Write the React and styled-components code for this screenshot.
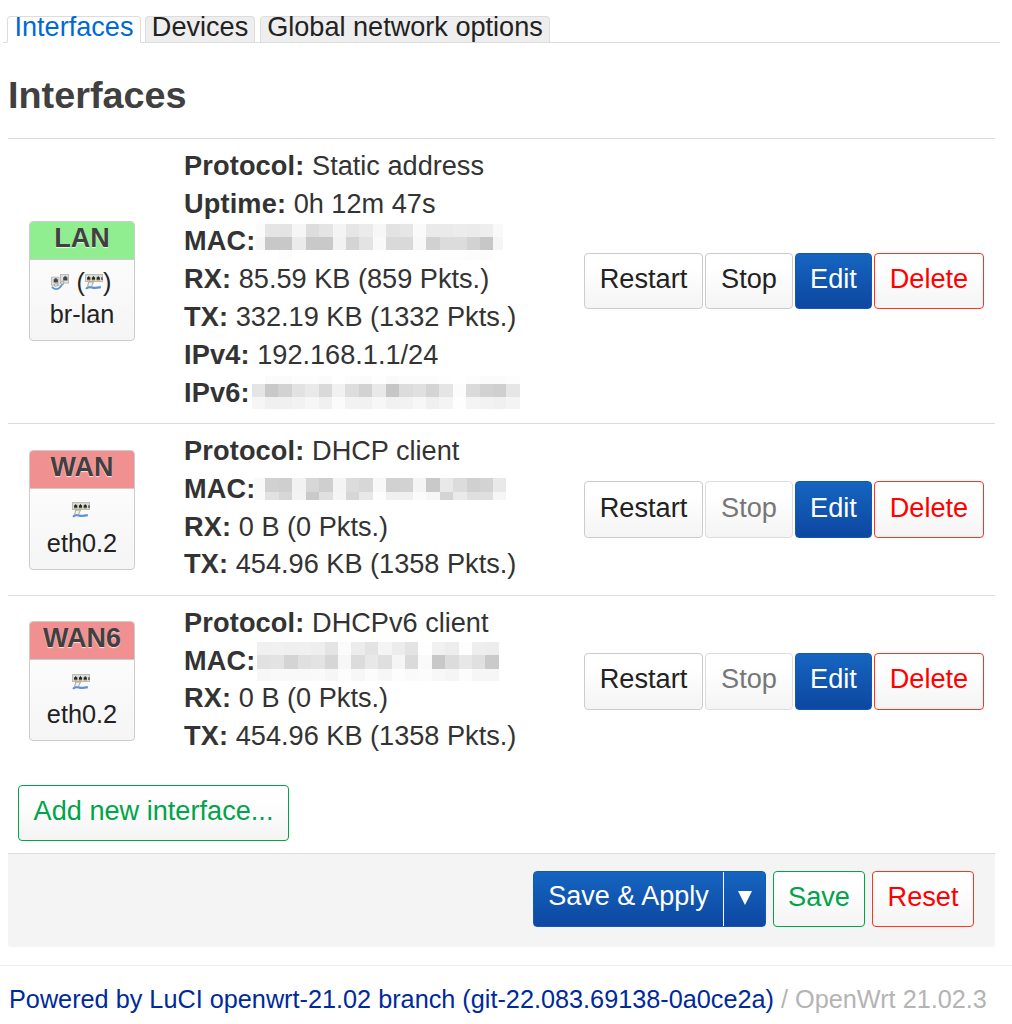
import React from "react";
import styled, { createGlobalStyle, css } from "styled-components";

const GlobalStyle = createGlobalStyle`
  * {
    box-sizing: border-box;
  }
  body {
    margin: 0;
    background: #fff;
    color: #333;
    font-family: "Liberation Sans", Arial, sans-serif;
    font-size: 27px;
    line-height: 37.8px;
    overflow: hidden;
  }
`;

const Page = styled.div`
  width: 1012px;
  height: 1024px;
  overflow: hidden;
`;

const Tabs = styled.nav`
  display: flex;
  align-items: flex-end;
  width: 997px;
  height: 43px;
  margin-left: 3px;
  padding-left: 4px;
  border-bottom: 1px solid #ddd;
`;

const Tab = styled.a`
  display: flex;
  align-items: center;
  justify-content: center;
  width: ${p => p.$width}px;
  height: ${p => (p.$active ? 27 : 26)}px;
  margin: 0 ${p => (p.$active ? 4 : 5)}px ${p => (p.$active ? -1 : 0)}px 0;
  padding-bottom: ${p => (p.$active ? 6 : 5)}px;
  border: 1px solid #ddd;
  border-bottom: ${p => (p.$active ? "1px solid #fff" : "0")};
  border-radius: 4px 4px 0 0;
  background: ${p => (p.$active ? "#fff" : "#eee")};
  color: ${p => (p.$active ? "#0069d6" : "#222")};
  font-size: 27.1px;
  line-height: 20px;
  white-space: nowrap;
`;

const Title = styled.h2`
  height: 95px;
  margin: 0 0 0 8px;
  padding-top: 25px;
  color: #404040;
  font-size: 37.8px;
  line-height: 54px;
`;

const Table = styled.div`
  width: 987px;
  margin-left: 8px;
`;

const Row = styled.div`
  display: grid;
  grid-template-columns: 176px 400px 400px;
  align-items: center;
  padding: 9.8px 0;
  border-top: 1px solid #ddd;
`;

const Badge = styled.div`
  width: 106px;
  height: 120px;
  margin-left: 21px;
  border: 1px solid #ccc;
  border-radius: 4px;
  background: linear-gradient(#fff, #f5f5f5);
  color: #222;
  text-align: center;
  overflow: hidden;
`;

const BadgeHead = styled.div`
  height: 38px;
  border-bottom: 1px solid #ccc;
  background: ${p => p.$color};
  color: #404040;
  font-weight: bold;
  line-height: 32px;
  text-shadow: 0 1px 1px rgba(255, 255, 255, 0.75);
`;

const BadgeIcons = styled.div`
  display: flex;
  align-items: center;
  justify-content: center;
  height: 32px;
  margin-left: -2px;
  padding-top: 11px;
  font-size: 25.3px;
  line-height: 32px;
`;

const DeviceName = styled.div`
  font-size: 25.3px;
  line-height: 44px;
`;

const IconGap = styled.span`
  width: 8px;
`;

const Line = styled.div`
  display: flex;
  height: 37.8px;
  font-size: 27.15px;
  line-height: 33px;
  white-space: pre;
`;

const Label = styled.b`
  letter-spacing: 0.15px;
`;

const Mosaic = styled.div`
  display: grid;
  grid-template-columns: ${p => p.$cols};
  grid-template-rows: ${p => p.$rows};
  margin: ${p => p.$margin};
`;

const Cell = styled.i`
  background: ${p => p.$tone};
`;

const Buttons = styled.div`
  display: flex;
  gap: ${p => p.$gap || 2}px;
`;

const tones = {
  neutral: css`
    color: #222;
    border-color: #ccc;
  `,
  positive: css`
    color: #00a449;
    border-color: #00a449;
  `,
  negative: css`
    color: #f00;
    border-color: #f32;
  `,
  primary: css`
    color: #fff;
    border-color: #1259b5;
    background: linear-gradient(#1565c0, #0d47a1);
  `
};

const Button = styled.button`
  width: ${p => p.$width}px;
  height: 56.5px;
  padding: 0 0 4px;
  border: 1px solid;
  border-radius: 4px;
  background: linear-gradient(#fff, #fff 25%, #f4f4f4);
  font: inherit;
  font-size: 27.15px;
  white-space: nowrap;
  ${p => tones[p.$tone || "neutral"]}

  &:disabled {
    color: #777;
    border-color: #ddd;
  }
`;

const AddSection = styled.div`
  padding: 18px 0 0 18px;
  height: 86px;
`;

const Actions = styled.div`
  display: flex;
  justify-content: flex-end;
  width: 987px;
  height: 94px;
  margin-left: 8px;
  padding: 17px 21px 0 0;
  border-top: 1px solid #ddd;
  border-radius: 0 0 3px 3px;
  background: #f4f4f4;
`;

const Split = styled.div`
  display: flex;
  width: 233px;
  height: 56.5px;
  border: 1px solid #1259b5;
  border-radius: 4px;
  background: linear-gradient(#1565c0, #0d47a1);
  color: #fff;
`;

const SplitLabel = styled.span`
  width: 190px;
  padding-top: 6.5px;
  border-right: 1px solid #fff;
  text-align: center;
`;

const SplitArrow = styled.span`
  display: flex;
  flex: 1;
  align-items: center;
  justify-content: center;
`;

const Footer = styled.footer`
  margin-top: 18px;
  padding: 15px 0 0 9px;
  border-top: 1px solid #eee;
  color: #b4b4b4;
  font-size: 25.25px;
  white-space: pre;
`;

const FooterLink = styled.a`
  color: #002a9a;
`;

const BridgeIcon = () => (
  <svg width="18" height="18" viewBox="0 0 17 17">
    <rect x="0.500" y="4" width="7" height="7.500" fill="#e2e2de" stroke="#bbb" />
    <rect x="9" y="1.500" width="7.500" height="8" fill="#e2e2de" stroke="#bbb" />
    <path d="M2.500 9V6h1V5h2v1h1v3zM11.500 7V4h1V3h2v1h1v3z" fill="#444" />
    <path d="M1 13c2 3.500 6 2.500 8 0 1-1.500 1-2.500 3-3" fill="none" stroke="#5b93d8" strokeWidth="1.8" />
    <path d="M3 11l3-2v3l-2 1zM9 9l3-2v3l-2 1z" fill="#ddd" stroke="#999" strokeWidth="0.7" />
  </svg>
);

const SwitchIcon = () => (
  <svg width="18" height="18" viewBox="0 0 17 17">
    <rect x="0.500" y="1.500" width="16" height="6.500" fill="#deded8" stroke="#bbb" />
    <path d="M2 6.500V4h1V3h1v1h1v2.500zM6.500 6.500V4h1V3h1v1h1v2.500zM11 6.500V4h1V3h1v1h1v2.500zM15.500 6.500V4h1v2.500z" fill="#222" />
    <path d="M2 6.700h3M6.500 6.700h3M11 6.700h3" stroke="#a99b3c" />
    <path d="M1 15c2-2.500 4-2 7-1 2 .3 4-.5 7-.7" fill="none" stroke="#5b93d8" strokeWidth="2.200" />
    <path d="M3.500 8.500h4.500l-2 4.500-3.500-.5z" fill="#eee" stroke="#999" strokeWidth="0.8" />
  </svg>
);

const mosaics = {
  lanMac: {
    cols: "9px repeat(17, 13.42px) 10px",
    rows: "13px 13px 10px",
    margin: "-0.8px 0 0 1px",
    cells: [
      "fb e5 e4 f6 dd e4 f4 e6 eb f7 e3 e6 fa ea ea ec eb ee f9",
      "f6 c8 c8 eb c9 c9 f2 d4 e3 f9 d9 d9 f8 d1 dc dc d2 c7 f5",
      "ff ff fc ff ff ff ff ff ff ff ff ff ff ff fd fd fc fc ff"
    ]
  },
  lanIpv6: {
    cols: "13.4px repeat(18, 13.42px) 13.4px",
    rows: "8px 13px 12px",
    margin: "0.6px 0 0 2px",
    cells: [
      "ff fb fb fd fd fb ff fc fb fe fa fc fc fc fe ff fd fb fb fd",
      "e5 c9 d2 e2 e9 d9 f1 dd d2 e9 c6 dc e0 d4 e5 fc da d2 cf e6",
      "f6 f0 f0 f2 f6 f0 fb f2 f1 f7 f1 f2 f7 ef f4 fe f4 f2 f0 f4"
    ]
  },
  wanMac: {
    cols: "11px repeat(17, 13.42px) 12.5px",
    rows: "13.4px 8.6px",
    margin: "6.6px 0 0 -1px",
    cells: [
      "f9 d1 cf f2 d7 cf f4 dc d7 f8 d1 d2 f4 c9 e9 dc d0 d3 e9",
      "fa e2 d7 f3 ca e0 f5 d6 e8 fd f0 f0 fb f6 d4 ea df df f6"
    ]
  },
  wan6Mac: {
    cols: "repeat(18, 13.42px)",
    rows: "13px 14px 12.6px",
    margin: "-2px 0 0 2px",
    cells: [
      "f0 f1 ef f0 ee e4 fb ec e3 f4 ec e3 fe f1 ed fd ee ed",
      "e1 e3 d4 e0 e3 d6 f7 dc e8 df f5 da fa c8 dc e7 e0 ca",
      "f7 f9 f9 f9 fa f6 fd f7 fc f7 fd fa fc f8 f5 fc f6 f6"
    ]
  }
};

const interfaces = [
  {
    name: "LAN",
    color: "#90ee90",
    device: "br-lan",
    bridge: true,
    lines: [
      ["Protocol", "Static address"],
      ["Uptime", "0h 12m 47s"],
      ["MAC", null, "lanMac"],
      ["RX", "85.59 KB (859 Pkts.)"],
      ["TX", "332.19 KB (1332 Pkts.)"],
      ["IPv4", "192.168.1.1/24"],
      ["IPv6", null, "lanIpv6"]
    ]
  },
  {
    name: "WAN",
    color: "#f09090",
    device: "eth0.2",
    stopped: true,
    lines: [
      ["Protocol", "DHCP client"],
      ["MAC", null, "wanMac"],
      ["RX", "0 B (0 Pkts.)"],
      ["TX", "454.96 KB (1358 Pkts.)"]
    ]
  },
  {
    name: "WAN6",
    color: "#f09090",
    device: "eth0.2",
    stopped: true,
    lines: [
      ["Protocol", "DHCPv6 client"],
      ["MAC", null, "wan6Mac"],
      ["RX", "0 B (0 Pkts.)"],
      ["TX", "454.96 KB (1358 Pkts.)"]
    ]
  }
];

const Redacted = ({ id }) => {
  const { cols, rows, margin, cells } = mosaics[id];
  return (
    <Mosaic $cols={cols} $rows={rows} $margin={margin}>
      {cells.join(" ").split(" ").map((v, i) => (
        <Cell key={i} $tone={`#${v}${v}${v}`} />
      ))}
    </Mosaic>
  );
};

const InterfaceRow = ({ item }) => (
  <Row>
    <Badge>
      <BadgeHead $color={item.color}>{item.name}</BadgeHead>
      <BadgeIcons>
        {item.bridge ? (
          <>
            <BridgeIcon />
            <IconGap />
            (<SwitchIcon />)
          </>
        ) : (
          <SwitchIcon />
        )}
      </BadgeIcons>
      <DeviceName>{item.device}</DeviceName>
    </Badge>
    <div>
      {item.lines.map(([label, value, mosaic]) => (
        <Line key={label}>
          <Label>{label}:</Label>
          {mosaic ? <Redacted id={mosaic} /> : <span> {value}</span>}
        </Line>
      ))}
    </div>
    <Buttons>
      <Button $width={119}>Restart</Button>
      <Button $width={88} disabled={item.stopped}>Stop</Button>
      <Button $width={77} $tone="primary">Edit</Button>
      <Button $width={110} $tone="negative">Delete</Button>
    </Buttons>
  </Row>
);

export default function App() {
  return (
    <Page>
      <GlobalStyle />
      <Tabs>
        <Tab $active $width={134}>Interfaces</Tab>
        <Tab $width={110}>Devices</Tab>
        <Tab $width={290}>Global network options</Tab>
      </Tabs>
      <Title>Interfaces</Title>
      <Table>
        {interfaces.map(item => (
          <InterfaceRow key={item.name} item={item} />
        ))}
      </Table>
      <AddSection>
        <Button $width={271} $tone="positive">Add new interface...</Button>
      </AddSection>
      <Actions>
        <Buttons $gap={7}>
          <Split>
            <SplitLabel>Save &amp; Apply</SplitLabel>
            <SplitArrow>
              <svg width="14" height="16" viewBox="0 0 14 16">
                <path d="M0 0h14L7 14z" fill="#fff" />
              </svg>
            </SplitArrow>
          </Split>
          <Button $width={92} $tone="positive">Save</Button>
          <Button $width={102} $tone="negative">Reset</Button>
        </Buttons>
      </Actions>
      <Footer>
        <FooterLink>Powered by LuCI openwrt-21.02 branch (git-22.083.69138-0a0ce2a)</FooterLink> / OpenWrt 21.02.3
      </Footer>
    </Page>
  );
}
